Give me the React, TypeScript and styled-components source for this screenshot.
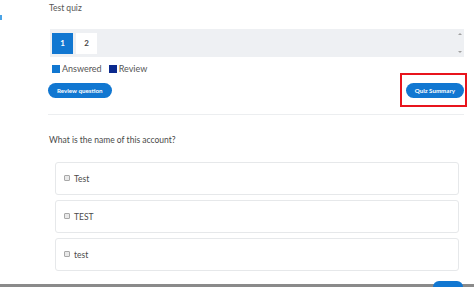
import React from "react";
import styled, { createGlobalStyle } from "styled-components";

const Global = createGlobalStyle`
  html, body { margin: 0; padding: 0; background: #ffffff; }
  body { font-family: Lato, "Open Sans", "Liberation Sans", sans-serif; color: #4a4a4a; }
  * { box-sizing: border-box; }
`;

const Page = styled.div`
  position: relative;
  width: 474px;
  height: 287px;
  overflow: hidden;
  padding: 2px 7px 0 49px;
  display: flex;
  flex-direction: column;
`;

const SideMark = styled.div`
  position: absolute;
  left: 0;
  top: 15px;
  width: 2px;
  height: 5px;
  background: #4aa3e6;
`;

const Title = styled.div`
  font-size: 8.5px;
  line-height: 12px;
  color: #555;
  height: 12px;
`;

const NavPanel = styled.div`
  margin-top: 15px;
  margin-left: 1px;
  height: 28px;
  width: 414px;
  background: #eef0f3;
  display: flex;
  align-items: center;
  gap: 3px;
  padding: 0 0 0 2px;
  position: relative;
`;

const NavButton = styled.div<{ $active?: boolean }>`
  width: 21px;
  height: 21px;
  display: flex;
  align-items: center;
  justify-content: center;
  font-size: 8px;
  font-weight: 700;
  color: ${(p) => (p.$active ? "#ffffff" : "#444")};
  background: ${(p) => (p.$active ? "#1177d1" : "#ffffff")};
`;

const ScrollArrows = styled.div`
  position: absolute;
  right: 2px;
  top: 4px;
  bottom: 4px;
  width: 5px;
  display: flex;
  flex-direction: column;
  justify-content: space-between;
  align-items: center;
`;

const Arrow = styled.div<{ $down?: boolean }>`
  width: 0;
  height: 0;
  border-left: 2px solid transparent;
  border-right: 2px solid transparent;
  ${(p) => (p.$down ? "border-top: 2px solid #a0a0a0;" : "border-bottom: 2px solid #a0a0a0;")}
`;

const Legend = styled.div`
  margin-top: 7px;
  margin-left: 3px;
  display: flex;
  align-items: center;
  font-size: 9px;
  line-height: 9px;
  height: 9px;
  color: #555;
`;

const Swatch = styled.span<{ $color: string }>`
  display: inline-block;
  width: 8px;
  height: 8px;
  background: ${(p) => p.$color};
  margin-right: 2px;
`;

const LegendItem = styled.span`
  display: inline-flex;
  align-items: center;
  margin-right: 7px;
`;

const ActionRow = styled.div`
  margin-top: 0;
  height: 34px;
  display: flex;
  align-items: center;
  justify-content: space-between;
  border-bottom: 1px solid #eceef0;
  padding-bottom: 7px;
  box-sizing: content-box;
  width: 416px;
  margin-left: -1px;
`;

const PillButton = styled.div`
  height: 15px;
  padding: 0 9px;
  border-radius: 8px;
  background: #1177d1;
  color: #ffffff;
  font-size: 6.2px;
  font-weight: 700;
  display: flex;
  align-items: center;
  justify-content: center;
`;

const Highlight = styled.div`
  border: 2px solid #e8141c;
  width: 67px;
  height: 34px;
  display: flex;
  align-items: center;
  justify-content: flex-end;
  padding-right: 1px;
  margin-right: -3px;
`;

const Question = styled.div`
  margin-top: 19px;
  font-size: 8.5px;
  line-height: 12px;
  color: #4a4a4a;
`;

const Options = styled.div`
  margin-top: 16px;
  margin-left: 6px;
  width: 404px;
  display: flex;
  flex-direction: column;
  gap: 5px;
`;

const OptionBox = styled.label`
  height: 33px;
  border: 1px solid #e6e8ea;
  border-radius: 3px;
  display: flex;
  align-items: center;
  padding-left: 8px;
  font-size: 8.5px;
  color: #4a4a4a;
`;

const Check = styled.span`
  width: 6px;
  height: 6px;
  border: 1px solid #a8a8a8;
  border-radius: 1px;
  background: #e9e9e9;
  margin-right: 4px;
  margin-top: -1px;
`;

const BottomBar = styled.div`
  position: absolute;
  left: 0;
  right: 0;
  bottom: 0;
  height: 3px;
  background: #8a8a8a;
`;

const BottomButton = styled.div`
  position: absolute;
  left: 433px;
  bottom: 0;
  width: 30px;
  height: 6px;
  border-radius: 10px 10px 0 0;
  background: #1177d1;
`;

const options = ["Test", "TEST", "test"];

export default function App() {
  return (
    <>
      <Global />
      <Page>
        <SideMark />
        <Title>Test quiz</Title>
        <NavPanel>
          <NavButton $active>1</NavButton>
          <NavButton>2</NavButton>
          <ScrollArrows>
            <Arrow />
            <Arrow $down />
          </ScrollArrows>
        </NavPanel>
        <Legend>
          <LegendItem>
            <Swatch $color="#1177d1" />
            Answered
          </LegendItem>
          <LegendItem>
            <Swatch $color="#0b2a8e" />
            Review
          </LegendItem>
        </Legend>
        <ActionRow>
          <PillButton>Review question</PillButton>
          <Highlight>
            <PillButton>Quiz Summary</PillButton>
          </Highlight>
        </ActionRow>
        <Question>What is the name of this account?</Question>
        <Options>
          {options.map((o) => (
            <OptionBox key={o}>
              <Check />
              {o}
            </OptionBox>
          ))}
        </Options>
        <BottomBar />
        <BottomButton />
      </Page>
    </>
  );
}
